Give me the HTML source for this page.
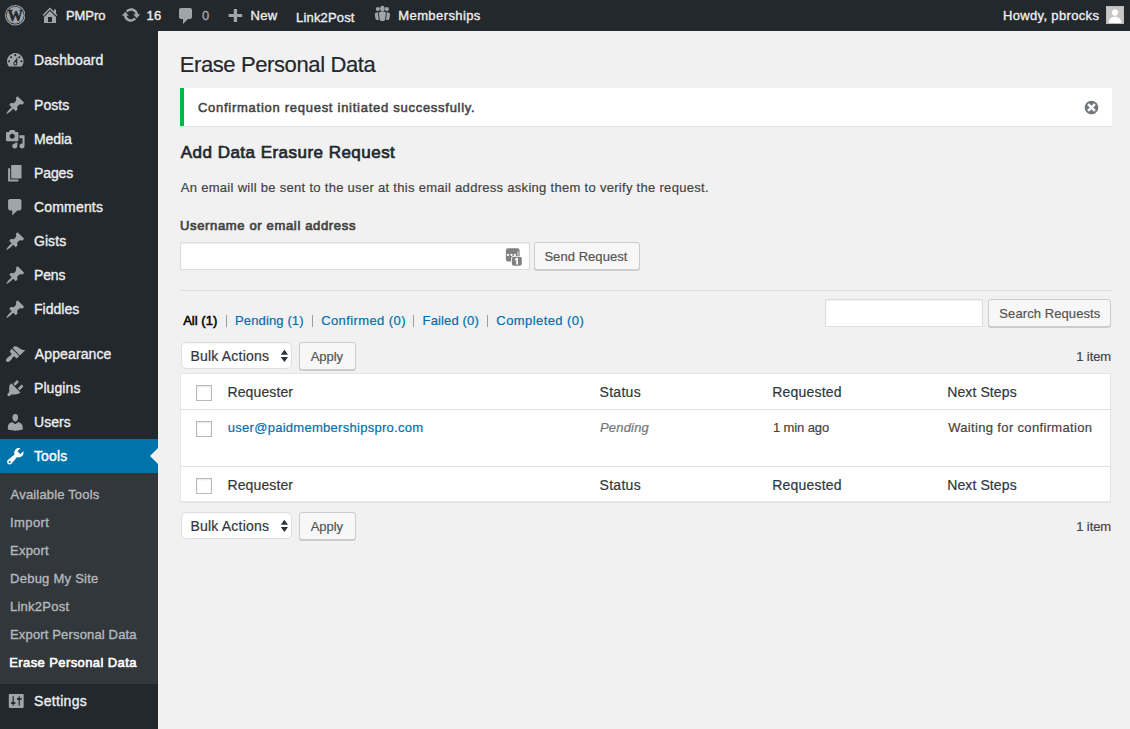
<!DOCTYPE html>
<html><head><meta charset="utf-8"><title>Erase Personal Data</title>
<style>
html,body{margin:0;padding:0;}
body{width:1130px;height:729px;overflow:hidden;background:#f1f1f1;position:relative;font-family:"Liberation Sans",sans-serif;}
.b{position:absolute;}
.t{position:absolute;white-space:nowrap;line-height:1;}
svg.i{position:absolute;}
</style></head><body>
<div class="b" style="left:0px;top:0px;width:1130px;height:31px;background:#23282d;"></div>
<div class="b" style="left:0px;top:31px;width:158px;height:698px;background:#23282d;"></div>
<div class="b" style="left:0px;top:439px;width:158px;height:34px;background:#0073aa;"></div>
<div class="b" style="left:150px;top:448px;width:0;height:0;border-top:8px solid transparent;border-bottom:8px solid transparent;border-right:8px solid #f1f1f1;"></div>
<div class="b" style="left:0px;top:473px;width:158px;height:211px;background:#32373c;"></div>
<span class="t" style="left:66.00px;top:9.00px;font-size:13px;color:#eee;letter-spacing:-0.090px;-webkit-text-stroke:0.35px #eee;">PMPro</span>
<span class="t" style="left:146.46px;top:9.00px;font-size:13px;color:#eee;letter-spacing:0.300px;-webkit-text-stroke:0.35px #eee;">16</span>
<span class="t" style="left:202.00px;top:9.00px;font-size:13px;color:#a0a5aa;-webkit-text-stroke:0.35px #a0a5aa;">0</span>
<span class="t" style="left:250.46px;top:9.00px;font-size:13px;color:#eee;letter-spacing:0.400px;-webkit-text-stroke:0.35px #eee;">New</span>
<span class="t" style="left:296.10px;top:11.00px;font-size:13px;color:#eee;letter-spacing:0.157px;-webkit-text-stroke:0.35px #eee;">Link2Post</span>
<span class="t" style="left:398.28px;top:9.00px;font-size:13px;color:#eee;letter-spacing:0.406px;-webkit-text-stroke:0.35px #eee;">Memberships</span>
<span class="t" style="left:1002.92px;top:9.00px;font-size:13px;color:#eee;letter-spacing:0.349px;-webkit-text-stroke:0.35px #eee;">Howdy, pbrocks</span>
<span class="t" style="left:34.00px;top:53.00px;font-size:14px;color:#eee;letter-spacing:0.105px;-webkit-text-stroke:0.35px #eee;">Dashboard</span>
<span class="t" style="left:34.00px;top:98.00px;font-size:14px;color:#eee;letter-spacing:0.060px;-webkit-text-stroke:0.35px #eee;">Posts</span>
<span class="t" style="left:34.00px;top:132.00px;font-size:14px;color:#eee;letter-spacing:-0.080px;-webkit-text-stroke:0.35px #eee;">Media</span>
<span class="t" style="left:34.00px;top:166.00px;font-size:14px;color:#eee;letter-spacing:-0.120px;-webkit-text-stroke:0.35px #eee;">Pages</span>
<span class="t" style="left:34.00px;top:200.00px;font-size:14px;color:#eee;letter-spacing:0.174px;-webkit-text-stroke:0.35px #eee;">Comments</span>
<span class="t" style="left:34.00px;top:234.00px;font-size:14px;color:#eee;letter-spacing:0.060px;-webkit-text-stroke:0.35px #eee;">Gists</span>
<span class="t" style="left:34.00px;top:268.00px;font-size:14px;color:#eee;letter-spacing:-0.173px;-webkit-text-stroke:0.35px #eee;">Pens</span>
<span class="t" style="left:34.00px;top:302.00px;font-size:14px;color:#eee;letter-spacing:0.033px;-webkit-text-stroke:0.35px #eee;">Fiddles</span>
<span class="t" style="left:34.80px;top:347.00px;font-size:14px;color:#eee;letter-spacing:0.122px;-webkit-text-stroke:0.35px #eee;">Appearance</span>
<span class="t" style="left:34.00px;top:381.00px;font-size:14px;color:#eee;letter-spacing:0.080px;-webkit-text-stroke:0.35px #eee;">Plugins</span>
<span class="t" style="left:34.00px;top:415.00px;font-size:14px;color:#eee;letter-spacing:0.060px;-webkit-text-stroke:0.35px #eee;">Users</span>
<span class="t" style="left:34.00px;top:449.00px;font-size:14px;color:#fff;letter-spacing:0.120px;-webkit-text-stroke:0.35px #fff;">Tools</span>
<span class="t" style="left:34.00px;top:694.00px;font-size:14px;color:#eee;letter-spacing:0.311px;-webkit-text-stroke:0.35px #eee;">Settings</span>
<span class="t" style="left:10.62px;top:488.00px;font-size:13px;color:#b4b9be;letter-spacing:0.169px;-webkit-text-stroke:0.35px #b4b9be;">Available Tools</span>
<span class="t" style="left:10.02px;top:516.00px;font-size:13px;color:#b4b9be;letter-spacing:0.420px;-webkit-text-stroke:0.35px #b4b9be;">Import</span>
<span class="t" style="left:10.02px;top:544.00px;font-size:13px;color:#b4b9be;letter-spacing:0.224px;-webkit-text-stroke:0.35px #b4b9be;">Export</span>
<span class="t" style="left:10.02px;top:572.00px;font-size:13px;color:#b4b9be;letter-spacing:0.255px;-webkit-text-stroke:0.35px #b4b9be;">Debug My Site</span>
<span class="t" style="left:10.02px;top:600.00px;font-size:13px;color:#b4b9be;letter-spacing:0.245px;-webkit-text-stroke:0.35px #b4b9be;">Link2Post</span>
<span class="t" style="left:10.02px;top:628.00px;font-size:13px;color:#b4b9be;letter-spacing:0.156px;-webkit-text-stroke:0.35px #b4b9be;">Export Personal Data</span>
<span class="t" style="left:9.28px;top:656.00px;font-size:13px;color:#fff;letter-spacing:0.403px;-webkit-text-stroke:0.6px #fff;">Erase Personal Data</span>
<span class="t" style="left:179.66px;top:54.00px;font-size:22px;color:#23282d;letter-spacing:-0.386px;-webkit-text-stroke:0.2px #23282d;">Erase Personal Data</span>
<div class="b" style="left:180px;top:88px;width:932px;height:38px;background:#fff;box-shadow:0 1px 1px rgba(0,0,0,.06);"></div>
<div class="b" style="left:180px;top:88px;width:4px;height:38px;background:#00b844;"></div>
<span class="t" style="left:198.00px;top:101.00px;font-size:13px;color:#444;letter-spacing:0.727px;-webkit-text-stroke:0.52px #444;">Confirmation request initiated successfully.</span>
<span class="t" style="left:180.80px;top:144.00px;font-size:17px;color:#23282d;letter-spacing:0.472px;-webkit-text-stroke:0.68px #23282d;">Add Data Erasure Request</span>
<span class="t" style="left:180.80px;top:181.00px;font-size:13px;color:#444;letter-spacing:0.295px;-webkit-text-stroke:0.2px #444;">An email will be sent to the user at this email address asking them to verify the request.</span>
<span class="t" style="left:180.00px;top:219.00px;font-size:13px;color:#444;letter-spacing:0.655px;-webkit-text-stroke:0.7px #444;">Username or email address</span>
<div class="b" style="left:180px;top:242px;width:350px;height:28px;background:#fff;border:1px solid #ddd;box-sizing:border-box;box-shadow:inset 0 1px 2px rgba(0,0,0,.07);"></div>
<div class="b" style="left:534px;top:242px;width:106px;height:28px;background:#f7f7f7;border:1px solid #ccc;border-radius:3px;box-sizing:border-box;box-shadow:0 1px 0 #ccc;"></div>
<svg class="i" style="left:505px;top:247px" width="18" height="20" viewBox="0 0 18 20"><rect x=".9" y="1.2" width="13.7" height="13.3" rx="2.2" fill="#808080"/><g fill="#fff"><rect x="1.9" y="6.9" width="2" height="2"/><rect x="5.5" y="6.9" width="2" height="2"/><rect x="8.9" y="6.9" width="2" height="2"/></g><rect x="12.3" y="4.5" width="1.4" height="4.4" fill="#c8c8c8"/><rect x="6.1" y="8.9" width="11.6" height="10.6" rx="2.6" fill="#fff"/><rect x="6.9" y="9.7" width="9.9" height="9" rx="2" fill="#808080"/><path fill="#fff" d="M11.2 11h1.8v6.4h-1.8v-4.4l-1.3.6v-1.5z"/></svg>
<span class="t" style="left:544.40px;top:250.00px;font-size:13px;color:#555;letter-spacing:0.055px;-webkit-text-stroke:0.2px #555;">Send Request</span>
<div class="b" style="left:180px;top:290px;width:932px;height:1px;background:#ddd;"></div>
<span class="t" style="left:183.16px;top:314.00px;font-size:13px;color:#000;letter-spacing:0.020px;-webkit-text-stroke:0.52px #000;">All (1)</span>
<div class="b" style="left:226px;top:315px;width:1px;height:12px;background:#999ea3;"></div>
<span class="t" style="left:235.02px;top:314.00px;font-size:13px;color:#006fb0;letter-spacing:0.134px;-webkit-text-stroke:0.2px #006fb0;">Pending (1)</span>
<div class="b" style="left:312px;top:315px;width:1px;height:12px;background:#999ea3;"></div>
<span class="t" style="left:321.18px;top:314.00px;font-size:13px;color:#006fb0;letter-spacing:0.402px;-webkit-text-stroke:0.2px #006fb0;">Confirmed (0)</span>
<div class="b" style="left:413px;top:315px;width:1px;height:12px;background:#999ea3;"></div>
<span class="t" style="left:422.56px;top:314.00px;font-size:13px;color:#006fb0;letter-spacing:0.149px;-webkit-text-stroke:0.2px #006fb0;">Failed (0)</span>
<div class="b" style="left:487px;top:315px;width:1px;height:12px;background:#999ea3;"></div>
<span class="t" style="left:496.36px;top:314.00px;font-size:13px;color:#006fb0;letter-spacing:0.417px;-webkit-text-stroke:0.2px #006fb0;">Completed (0)</span>
<div class="b" style="left:825px;top:299px;width:158px;height:28px;background:#fff;border:1px solid #ddd;box-sizing:border-box;box-shadow:inset 0 1px 2px rgba(0,0,0,.07);"></div>
<div class="b" style="left:988px;top:299px;width:123px;height:28px;background:#f7f7f7;border:1px solid #ccc;border-radius:3px;box-sizing:border-box;box-shadow:0 1px 0 #ccc;"></div>
<span class="t" style="left:999.36px;top:307.00px;font-size:13px;color:#555;letter-spacing:0.084px;-webkit-text-stroke:0.2px #555;">Search Requests</span>
<div class="b" style="left:181px;top:342px;width:111px;height:27px;background:#fff;border-radius:5px;border:1px solid #dedede;box-sizing:border-box;box-shadow:inset 0 1px 1px rgba(0,0,0,.04);"></div>
<span class="t" style="left:190.40px;top:349.00px;font-size:14px;color:#32373c;letter-spacing:0.209px;-webkit-text-stroke:0.2px #32373c;">Bulk Actions</span>
<svg class="i" style="left:280px;top:349px" width="9" height="14" viewBox="0 0 9 14"><path fill="#2c3338" d="M.8 5.7L4.4.7 8 5.7zM.8 8.1H8L4.4 13z"/></svg>
<div class="b" style="left:299px;top:342px;width:57px;height:28px;background:#f7f7f7;border:1px solid #ccc;border-radius:3px;box-sizing:border-box;box-shadow:0 1px 0 #ccc;"></div>
<span class="t" style="left:310.76px;top:350.00px;font-size:13px;color:#555;letter-spacing:-0.055px;-webkit-text-stroke:0.2px #555;">Apply</span>
<span class="t" style="left:1076.20px;top:350.00px;font-size:13px;color:#444;letter-spacing:-0.080px;-webkit-text-stroke:0.2px #444;">1 item</span>
<div class="b" style="left:180px;top:373px;width:931px;height:129px;background:#fff;border:1px solid #e5e5e5;box-sizing:border-box;box-shadow:0 1px 1px rgba(0,0,0,.04);"></div>
<div class="b" style="left:180px;top:409px;width:931px;height:1px;background:#e1e1e1;"></div>
<div class="b" style="left:180px;top:466px;width:931px;height:1px;background:#e1e1e1;"></div>
<div class="b" style="left:196px;top:385px;width:16px;height:16px;background:#fff;border:1px solid #b4b9be;box-sizing:border-box;box-shadow:inset 0 1px 2px rgba(0,0,0,.1);"></div>
<div class="b" style="left:196px;top:421px;width:16px;height:16px;background:#fff;border:1px solid #b4b9be;box-sizing:border-box;box-shadow:inset 0 1px 2px rgba(0,0,0,.1);"></div>
<div class="b" style="left:196px;top:478px;width:16px;height:16px;background:#fff;border:1px solid #b4b9be;box-sizing:border-box;box-shadow:inset 0 1px 2px rgba(0,0,0,.1);"></div>
<span class="t" style="left:227.50px;top:385.00px;font-size:14px;color:#32373c;letter-spacing:0.112px;-webkit-text-stroke:0.2px #32373c;">Requester</span>
<span class="t" style="left:599.50px;top:385.00px;font-size:14px;color:#32373c;letter-spacing:0.300px;-webkit-text-stroke:0.2px #32373c;">Status</span>
<span class="t" style="left:772.20px;top:385.00px;font-size:14px;color:#32373c;letter-spacing:0.213px;-webkit-text-stroke:0.2px #32373c;">Requested</span>
<span class="t" style="left:947.20px;top:385.00px;font-size:14px;color:#32373c;letter-spacing:0.111px;-webkit-text-stroke:0.2px #32373c;">Next Steps</span>
<span class="t" style="left:227.50px;top:478.00px;font-size:14px;color:#32373c;letter-spacing:0.112px;-webkit-text-stroke:0.2px #32373c;">Requester</span>
<span class="t" style="left:599.50px;top:478.00px;font-size:14px;color:#32373c;letter-spacing:0.300px;-webkit-text-stroke:0.2px #32373c;">Status</span>
<span class="t" style="left:772.20px;top:478.00px;font-size:14px;color:#32373c;letter-spacing:0.213px;-webkit-text-stroke:0.2px #32373c;">Requested</span>
<span class="t" style="left:947.20px;top:478.00px;font-size:14px;color:#32373c;letter-spacing:0.111px;-webkit-text-stroke:0.2px #32373c;">Next Steps</span>
<span class="t" style="left:227.82px;top:421.00px;font-size:13px;color:#006fb0;letter-spacing:0.276px;-webkit-text-stroke:0.2px #006fb0;">user@paidmembershipspro.com</span>
<span class="t" style="left:600.00px;top:421.00px;font-size:13px;color:#72777c;font-style:italic;letter-spacing:0.180px;-webkit-text-stroke:0.2px #72777c;">Pending</span>
<span class="t" style="left:773.00px;top:421.00px;font-size:13px;color:#444;letter-spacing:-0.113px;-webkit-text-stroke:0.2px #444;">1 min ago</span>
<span class="t" style="left:948.16px;top:421.00px;font-size:13px;color:#444;letter-spacing:0.341px;-webkit-text-stroke:0.2px #444;">Waiting for confirmation</span>
<div class="b" style="left:181px;top:512px;width:111px;height:27px;background:#fff;border-radius:5px;border:1px solid #dedede;box-sizing:border-box;box-shadow:inset 0 1px 1px rgba(0,0,0,.04);"></div>
<span class="t" style="left:190.40px;top:519.00px;font-size:14px;color:#32373c;letter-spacing:0.209px;-webkit-text-stroke:0.2px #32373c;">Bulk Actions</span>
<svg class="i" style="left:280px;top:519px" width="9" height="14" viewBox="0 0 9 14"><path fill="#2c3338" d="M.8 5.7L4.4.7 8 5.7zM.8 8.1H8L4.4 13z"/></svg>
<div class="b" style="left:299px;top:512px;width:57px;height:28px;background:#f7f7f7;border:1px solid #ccc;border-radius:3px;box-sizing:border-box;box-shadow:0 1px 0 #ccc;"></div>
<span class="t" style="left:310.76px;top:520.00px;font-size:13px;color:#555;letter-spacing:-0.055px;-webkit-text-stroke:0.2px #555;">Apply</span>
<span class="t" style="left:1076.20px;top:520.00px;font-size:13px;color:#444;letter-spacing:-0.080px;-webkit-text-stroke:0.2px #444;">1 item</span>
<svg class="i" style="left:4.5px;top:5px" width="20.5" height="20.5" viewBox="0 0 20 20"><circle cx="10" cy="10" r="9.5" fill="none" stroke="#a0a5aa" stroke-width="1"/><circle cx="10" cy="10" r="8.3" fill="#a0a5aa"/><text x="10" y="15.9" text-anchor="middle" font-family="Liberation Serif" font-weight="bold" font-size="16.5" fill="#23282d" stroke="#23282d" stroke-width="0.5" textLength="15" lengthAdjust="spacingAndGlyphs">W</text></svg>
<svg class="i" style="left:39.5px;top:5.2px" width="20" height="20" viewBox="0 0 20 20"><path fill="#a0a5aa" d="M16 8.5l1.53 1.53-1.06 1.06L10 4.62l-6.47 6.47-1.06-1.06L10 2.5l4 4v-2h2v4zm-6-2.46l6 5.99V18H4v-5.97zM12 17v-5H8v5h4z"/></svg>
<svg class="i" style="left:121px;top:4.5px" width="20" height="20" viewBox="0 0 20 20"><path fill="#a0a5aa" d="M10.2 3.28c3.53 0 6.43 2.61 6.92 6h2.08l-3.5 4-3.5-4h2.32c-.45-1.97-2.21-3.45-4.32-3.45-1.45 0-2.73.71-3.54 1.78L4.95 5.66C6.23 4.2 8.11 3.28 10.2 3.28zm-.4 13.44c-3.52 0-6.43-2.61-6.92-6H.8l3.5-4c1.17 1.33 2.33 2.67 3.5 4H5.480c.45 1.97 2.21 3.45 4.32 3.45 1.45 0 2.73-.71 3.54-1.78l1.71 1.95c-1.28 1.46-3.15 2.38-5.25 2.38z"/></svg>
<svg class="i" style="left:175.8px;top:6px" width="20" height="20" viewBox="0 0 20 20"><path fill="#a0a5aa" d="M5 2h9c1.1 0 2 .9 2 2v7c0 1.1-.9 2-2 2h-2l-5 5v-5H5c-1.1 0-2-.9-2-2V4c0-1.1.9-2 2-2z"/></svg>
<svg class="i" style="left:228px;top:8px" width="15" height="15" viewBox="0 0 15 15"><path fill="#a0a5aa" d="M5.8 .9h3.3v5.1h5.1v3H9.1v4.9H5.8V9H.6V6h5.2z"/></svg>
<svg class="i" style="left:374px;top:5px" width="17" height="17" viewBox="0 0 17 17"><g fill="#a0a5aa">
<ellipse cx="8.4" cy="3.4" rx="2.3" ry="2.7"/><ellipse cx="3.8" cy="4.1" rx="2" ry="2.1"/><ellipse cx="12.9" cy="4.1" rx="2" ry="2.1"/>
<path d="M4.9 8.6C4.9 7 6.5 6.3 8.4 6.3S11.9 7 11.9 8.6L11.1 14.8C10.9 15.7 9.9 16.1 8.4 16.1S5.9 15.7 5.7 14.8Z"/>
<path d="M4.3 7.2C2.3 7.2.8 7.9.8 9.5L1.5 13.8C1.7 14.6 2.5 15 3.5 15 4 15 4.5 14.9 4.8 14.7L4.1 9.5C4 8.6 4.1 7.8 4.5 7.3Z"/>
<path d="M12.5 7.2C14.5 7.2 16 7.9 16 9.5L15.3 13.8C15.1 14.6 14.3 15 13.3 15 12.8 15 12.3 14.9 12 14.7L12.7 9.5C12.8 8.6 12.7 7.8 12.3 7.3Z"/>
</g></svg>
<div class="b" style="left:1106px;top:6px;width:18px;height:18px;background:#c7c7c7;box-sizing:border-box;border:1px solid #bbb;overflow:hidden"><svg width="16" height="16" viewBox="0 0 16 16" style="position:absolute;left:0;top:0"><circle cx="8" cy="5.6" r="3.1" fill="#fff"/><path d="M1.8 16c0-4.2 2.6-6.3 6.2-6.3s6.2 2.1 6.2 6.3z" fill="#fff"/></svg></div>
<svg class="i" style="left:5.2px;top:49.8px" width="20.6" height="20.6" viewBox="0 0 20 20"><path fill="#a0a5aa" d="M3.76 16h12.48c1.1-1.37 1.76-3.110 1.76-5 0-4.42-3.58-8-8-8s-8 3.58-8 8c0 1.89.66 3.63 1.76 5zM10 4c.55 0 1 .45 1 1s-.45 1-1 1-1-.45-1-1 .45-1 1-1zM6 6c.55 0 1 .45 1 1s-.45 1-1 1-1-.45-1-1 .45-1 1-1zm8 0c.55 0 1 .45 1 1s-.45 1-1 1-1-.45-1-1 .45-1 1-1zm-5.37 5.55L12 7v6c0 1.1-.9 2-2 2s-2-.9-2-2c0-.57.24-1.08.63-1.45zM4 10c.55 0 1 .45 1 1s-.45 1-1 1-1-.45-1-1 .45-1 1-1zm12 0c.55 0 1 .45 1 1s-.45 1-1 1-1-.45-1-1 .45-1 1-1zm-5 3c0-.55-.45-1-1-1s-1 .45-1 1 .45 1 1 1 1-.45 1-1z"/></svg>
<svg class="i" style="left:5.2px;top:94.8px" width="20.6" height="20.6" viewBox="0 0 20 20"><path fill="#a0a5aa" d="M10.44 3.02l1.82-1.82 6.36 6.35-1.830 1.82c-1.05-.68-2.48-.57-3.41.36l-.75.75c-.92.93-1.04 2.35-.35 3.41l-1.83 1.82-2.41-2.41-2.8 2.79c-.42.42-3.38 2.71-3.8 2.29s1.86-3.39 2.28-3.81l2.79-2.79L4.1 9.36l1.83-1.82c1.05.69 2.48.57 3.4-.36l.75-.75c.93-.92 1.05-2.35.36-3.41z"/></svg>
<svg class="i" style="left:5.2px;top:128.8px" width="20.6" height="20.6" viewBox="0 0 20 20"><path fill="#a0a5aa" d="M13 11V4c0-.55-.45-1-1-1h-1.67L9 1H5L3.67 3H2c-.55 0-1 .45-1 1v7c0 .55.45 1 1 1h10c.55 0 1-.45 1-1zM7 4.5c1.38 0 2.5 1.12 2.5 2.5S8.38 9.5 7 9.5 4.5 8.38 4.5 7 5.62 4.5 7 4.5zM14 6h5v10.5c0 1.38-1.12 2.5-2.5 2.5S14 17.88 14 16.5s1.12-2.5 2.5-2.5c.17 0 .34.02.5.05V9h-3V6zm-4 8.05V13h2v3.5c0 1.38-1.12 2.5-2.5 2.5S7 17.88 7 16.5 8.12 14 9.5 14c.17 0 .34.02.5.05z"/></svg>
<svg class="i" style="left:5.2px;top:162.8px" width="20.6" height="20.6" viewBox="0 0 20 20"><path fill="#a0a5aa" d="M6 15V2h10v13H6zm-1 1h8v2H3V5h2v11z"/></svg>
<svg class="i" style="left:5.2px;top:196.8px" width="20.6" height="20.6" viewBox="0 0 20 20"><path fill="#a0a5aa" d="M5 2h9c1.1 0 2 .9 2 2v7c0 1.1-.9 2-2 2h-2l-5 5v-5H5c-1.1 0-2-.9-2-2V4c0-1.1.9-2 2-2z"/></svg>
<svg class="i" style="left:5.2px;top:230.8px" width="20.6" height="20.6" viewBox="0 0 20 20"><path fill="#a0a5aa" d="M10.44 3.02l1.82-1.82 6.36 6.35-1.830 1.82c-1.05-.68-2.48-.57-3.41.36l-.75.75c-.92.93-1.04 2.35-.35 3.41l-1.83 1.82-2.41-2.41-2.8 2.79c-.42.42-3.38 2.71-3.8 2.29s1.86-3.39 2.28-3.81l2.79-2.79L4.1 9.36l1.83-1.82c1.05.69 2.48.57 3.4-.36l.75-.75c.93-.92 1.05-2.35.36-3.41z"/></svg>
<svg class="i" style="left:5.2px;top:264.8px" width="20.6" height="20.6" viewBox="0 0 20 20"><path fill="#a0a5aa" d="M10.44 3.02l1.82-1.82 6.36 6.35-1.830 1.82c-1.05-.68-2.48-.57-3.41.36l-.75.75c-.92.93-1.04 2.35-.35 3.41l-1.83 1.82-2.41-2.41-2.8 2.79c-.42.42-3.38 2.71-3.8 2.29s1.86-3.39 2.28-3.81l2.79-2.79L4.1 9.36l1.83-1.82c1.05.69 2.48.57 3.4-.36l.75-.75c.93-.92 1.05-2.35.36-3.41z"/></svg>
<svg class="i" style="left:5.2px;top:298.8px" width="20.6" height="20.6" viewBox="0 0 20 20"><path fill="#a0a5aa" d="M10.44 3.02l1.82-1.82 6.36 6.35-1.830 1.82c-1.05-.68-2.48-.57-3.41.36l-.75.75c-.92.93-1.04 2.35-.35 3.41l-1.83 1.82-2.41-2.41-2.8 2.79c-.42.42-3.38 2.71-3.8 2.29s1.86-3.39 2.28-3.81l2.79-2.79L4.1 9.36l1.83-1.82c1.05.69 2.48.57 3.4-.36l.75-.75c.93-.92 1.05-2.35.36-3.41z"/></svg>
<svg class="i" style="left:5.2px;top:343.8px" width="20.6" height="20.6" viewBox="0 0 20 20"><path fill="#a0a5aa" d="M14.48 11.06L7.41 3.99l1.5-1.5c.5-.56 2.3-.47 3.51.32 1.21.8 1.43 1.28 2.91 2.1 1.18.64 2.45 1.26 4.45.85zm-.71.71L6.7 4.7 4.93 6.47c-.39.39-.39 1.020 0 1.41l1.06 1.06c.39.39.39 1.03 0 1.42-.6.6-1.43 1.11-2.21 1.69-.35.26-.7.53-1.01.84C1.43 14.23.4 16.08 1.4 17.07c.99 1 2.84-.03 4.18-1.36.31-.31.58-.66.85-1.02.57-.78 1.08-1.61 1.69-2.21.39-.39 1.02-.39 1.41 0l1.06 1.06c.39.39 1.02.39 1.41 0z"/></svg>
<svg class="i" style="left:5.2px;top:377.8px" width="20.6" height="20.6" viewBox="0 0 20 20"><path fill="#a0a5aa" d="M13.11 4.36L9.87 7.6 8 5.73l3.24-3.24c.35-.34 1.05-.2 1.56.32.52.51.66 1.21.31 1.55zm-8 1.77l.91-1.12 9.01 9.01-1.19.84c-.71.71-2.63 1.16-3.82 1.16H6.14L4.9 17.26c-.59.59-1.54.59-2.12 0-.59-.58-.59-1.53 0-2.12l1.24-1.24v-3.88c0-1.13.4-3.19 1.09-3.89zm7.26 3.970l3.24-3.24c.34-.35 1.04-.21 1.55.31.52.51.66 1.21.31 1.55l-3.24 3.25z"/></svg>
<svg class="i" style="left:5.2px;top:411.8px" width="20.6" height="20.6" viewBox="0 0 20 20"><path fill="#a0a5aa" d="M10 9.25c-2.27 0-2.73-3.44-2.73-3.44C7 4.02 7.82 2 9.97 2c2.16 0 2.98 2.02 2.71 3.81 0 0-.41 3.44-2.68 3.440zm0 2.57L12.72 10c2.39 0 4.52 2.33 4.52 4.53v2.49s-3.65 1.13-7.24 1.13c-3.65 0-7.24-1.13-7.24-1.13v-2.49c0-2.25 1.94-4.48 4.47-4.48z"/></svg>
<svg class="i" style="left:5.2px;top:445.8px" width="20.6" height="20.6" viewBox="0 0 20 20"><path fill="#fff" d="M16.68 9.77c-1.34 1.34-3.3 1.67-4.95.99l-5.41 6.52c-.99.99-2.59.99-3.58 0s-.99-2.59 0-3.57l6.52-5.42c-.68-1.65-.35-3.61.99-4.95 1.28-1.28 3.12-1.62 4.72-1.06l-2.89 2.89 2.82 2.82 2.86-2.87c.53 1.58.18 3.39-1.08 4.65zM3.81 16.21c.4.39 1.04.39 1.43 0 .4-.4.4-1.04 0-1.43-.39-.4-1.03-.4-1.43 0-.39.39-.39 1.03 0 1.43z"/></svg>
<svg class="i" style="left:8px;top:693px" width="17" height="16" viewBox="0 0 17 16"><rect x="0.8" y="0.9" width="14.9" height="14" rx="0.8" fill="#a0a5aa"/><g fill="#23282d"><rect x="4.6" y="3.1" width="1.2" height="9.7" rx=".6"/><rect x="2.9" y="9.1" width="4.6" height="1.8" rx=".9"/><rect x="10.6" y="3.1" width="1.2" height="9.7" rx=".6"/><rect x="8.8" y="5" width="5" height="1.8" rx=".9"/></g></svg>
<svg class="i" style="left:1083.3px;top:98.6px" width="17" height="17" viewBox="0 0 20 20"><path fill="#72777c" d="M10 2c4.42 0 8 3.58 8 8s-3.58 8-8 8-8-3.58-8-8 3.58-8 8-8zm5 11l-3-3 3-3-2-2-3 3-3-3-2 2 3 3-3 3 2 2 3-3 3 3z"/></svg>
</body></html>
